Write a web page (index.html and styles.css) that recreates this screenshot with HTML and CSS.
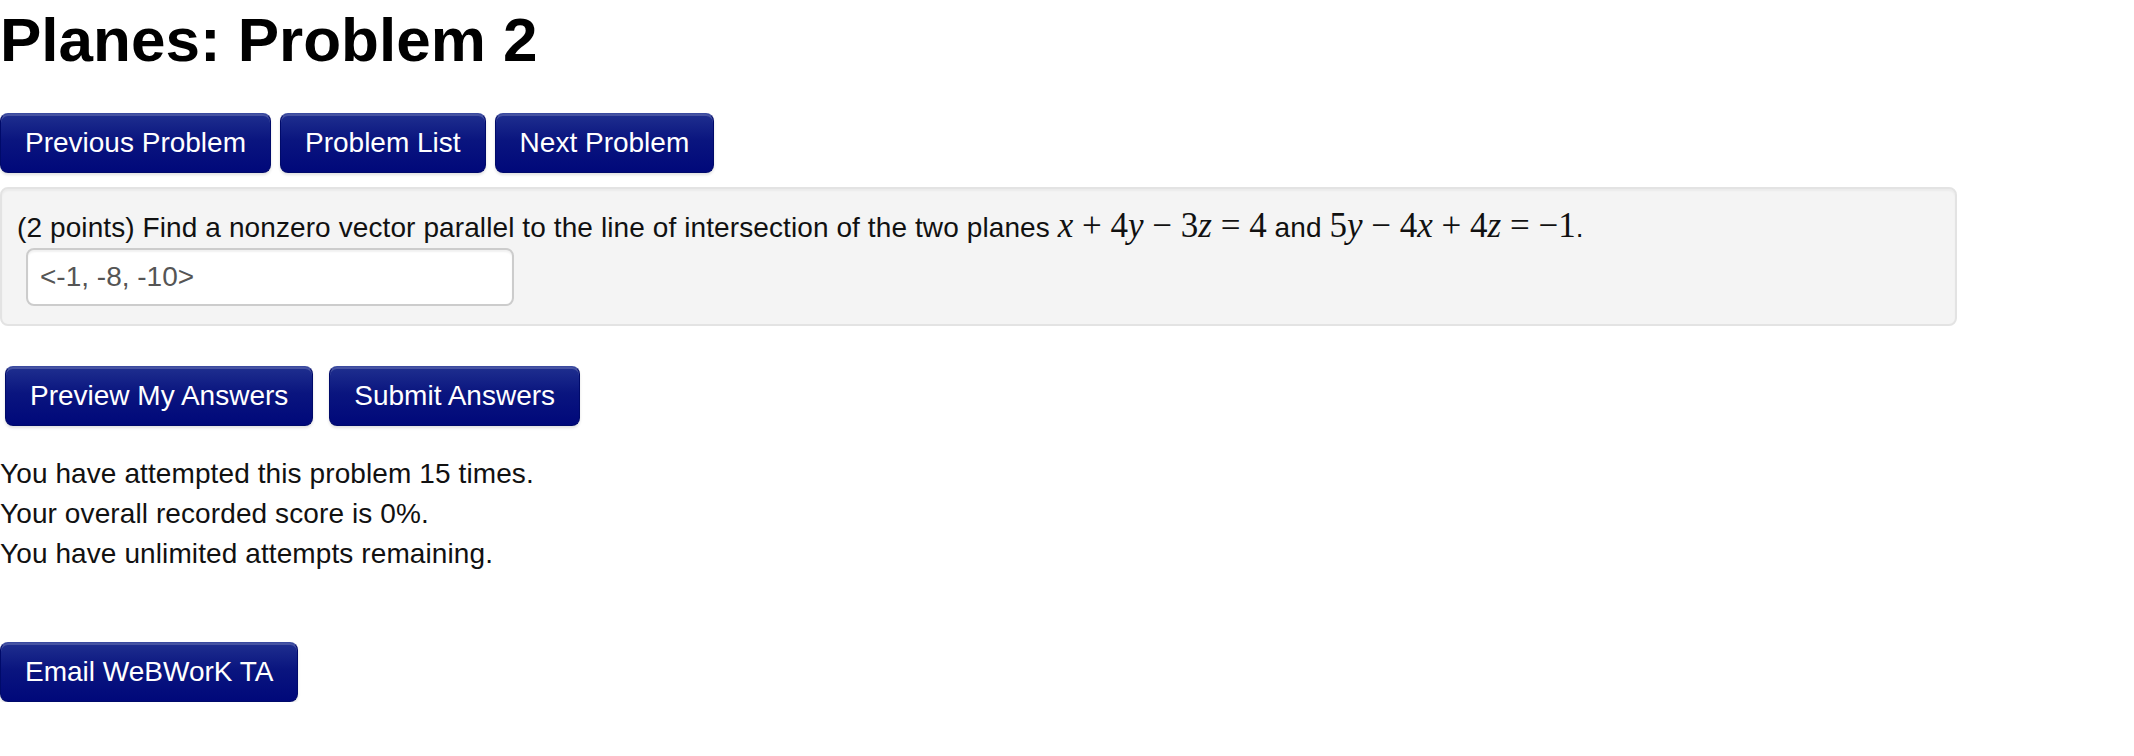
FILE: index.html
```html
<!DOCTYPE html>
<html lang="en">
<head>
<meta charset="utf-8">
<title>Planes: Problem 2</title>
<link rel="stylesheet" href="styles.css">
</head>
<body>
<h2 class="title">Planes: Problem 2</h2>
<div class="nav">
  <a class="btn">Previous Problem</a>
  <a class="btn">Problem List</a>
  <a class="btn">Next Problem</a>
</div>
<div class="well">
  <div class="problem-text">(2 points) Find a nonzero vector parallel to the line of intersection of the two planes <span class="math"><i>x</i> + 4<i>y</i> − 3<i>z</i> = 4</span> and <span class="math">5<i>y</i> − 4<i>x</i> + 4<i>z</i> = −1</span>.</div>
  <input class="answer" type="text" value="<-1, -8, -10>">
</div>
<div class="submit-row">
  <button class="btn">Preview My Answers</button>
  <button class="btn">Submit Answers</button>
</div>
<div class="score">
  <div>You have attempted this problem 15 times.</div>
  <div>Your overall recorded score is 0%.</div>
  <div>You have unlimited attempts remaining.</div>
</div>
<div class="email-row">
  <button class="btn">Email WeBWorK TA</button>
</div>
</body>
</html>
```
FILE: styles.css
```css
html, body {
  margin: 0;
  padding: 0;
  background: #ffffff;
}
body {
  font-family: "Liberation Sans", Arial, Helvetica, sans-serif;
  font-size: 28px;
  line-height: 40px;
  letter-spacing: 0.1px;
  color: #111111;
}
.title {
  margin: 0;
  font-size: 62px;
  line-height: 80px;
  font-weight: bold;
  letter-spacing: 0;
  color: #000000;
}
.nav {
  display: flex;
  gap: 9px;
  margin-top: 33px;
}
.btn {
  display: inline-block;
  box-sizing: border-box;
  height: 60px;
  padding: 9px 24px;
  font-family: "Liberation Sans", Arial, Helvetica, sans-serif;
  font-size: 28px;
  line-height: 40px;
  letter-spacing: 0;
  color: #ffffff;
  background: linear-gradient(to bottom, #1f2f8f 0%, #0a157f 45%, #00087a 100%);
  border: 1px solid #000a6a;
  border-top-color: #3a4aa0;
  border-radius: 8px;
  box-shadow: inset 0 2px 0 rgba(255,255,255,0.18), 0 2px 3px rgba(0,0,0,0.12);
  cursor: pointer;
  white-space: nowrap;
}
.well {
  box-sizing: border-box;
  width: 1957px;
  margin-top: 14px;
  padding: 19px 15px 18px 15px;
  background: #f4f4f4;
  border: 2px solid #e3e3e3;
  border-radius: 8px;
  box-shadow: inset 0 2px 2px rgba(0,0,0,0.04);
}
.problem-text {
  color: #111111;
}
.math {
  font-family: "Liberation Serif", "Times New Roman", serif;
  font-size: 35px;
  line-height: 1;
  letter-spacing: 0;
}
.math i {
  font-style: italic;
}
.answer {
  display: block;
  box-sizing: border-box;
  width: 488px;
  height: 58px;
  margin: 0 0 0 9px;
  padding: 0 12px;
  font-family: "Liberation Sans", Arial, Helvetica, sans-serif;
  font-size: 28px;
  color: #555555;
  background: #ffffff;
  border: 2px solid #cccccc;
  border-radius: 8px;
  box-shadow: inset 0 2px 2px rgba(0,0,0,0.06);
  outline: none;
}
.submit-row {
  display: flex;
  gap: 16px;
  margin: 40px 0 0 5px;
}
.score {
  margin-top: 28px;
  color: #111111;
}
.email-row {
  margin-top: 68px;
}
```
